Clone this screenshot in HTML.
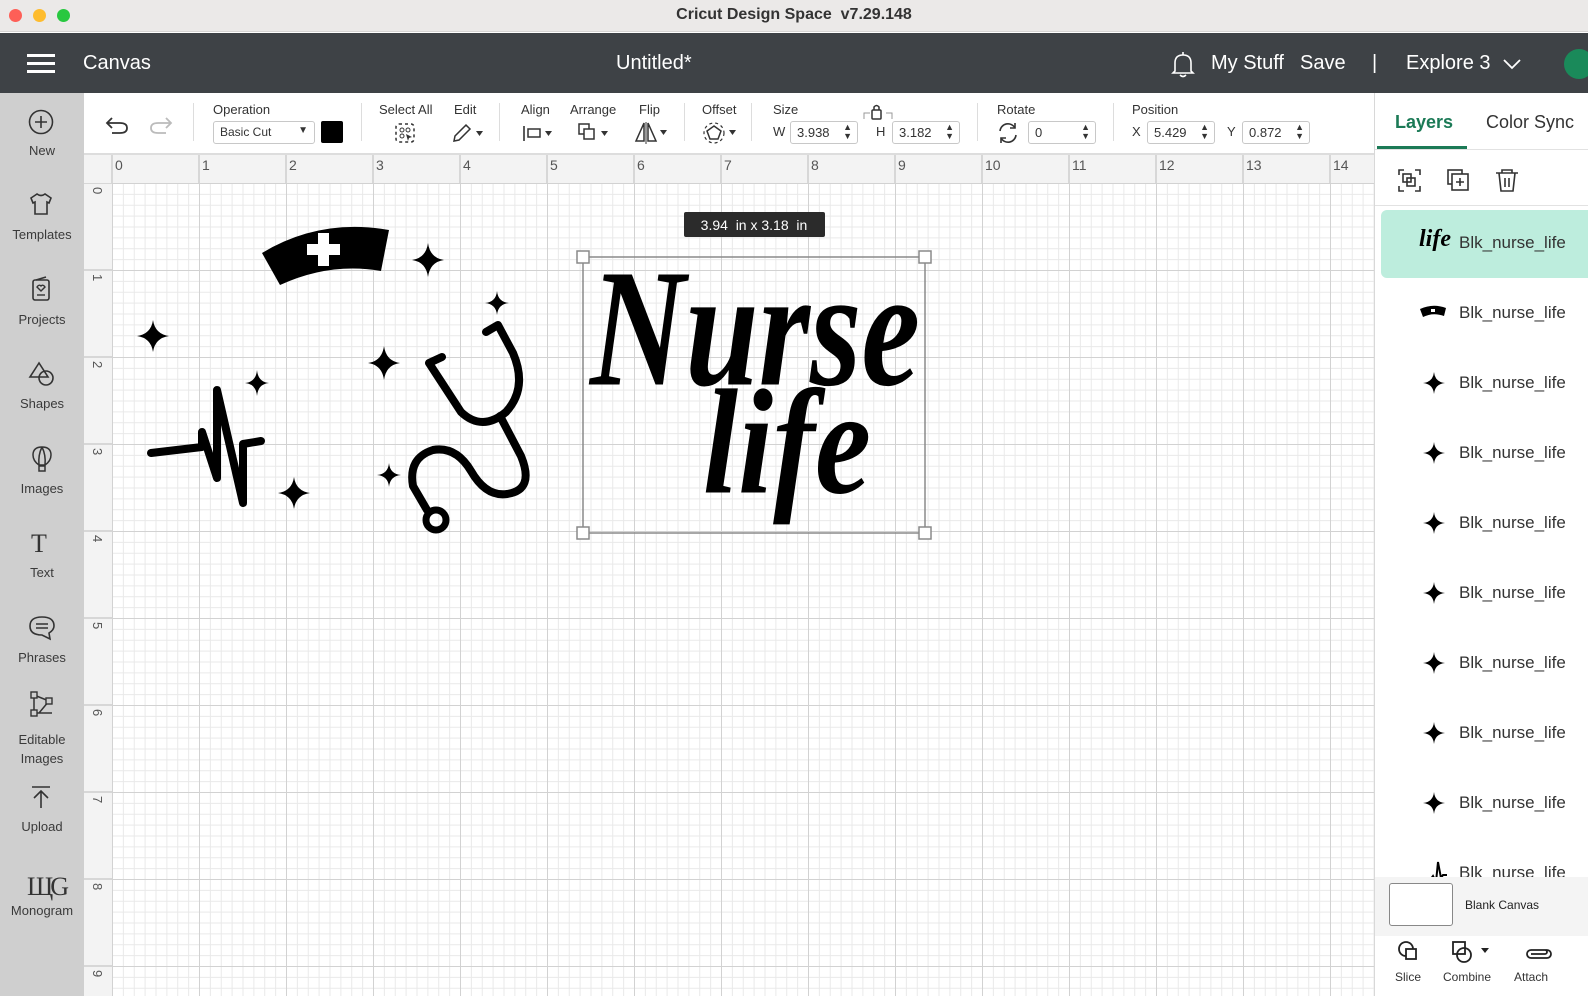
<!DOCTYPE html>
<html><head><meta charset="utf-8"><style>
*{margin:0;padding:0;box-sizing:border-box}
body{width:1588px;height:996px;overflow:hidden;position:relative;font-family:"Liberation Sans",sans-serif;background:#fff;color:#333}
.abs{position:absolute}
#title{left:0;top:0;width:1588px;height:32px;background:#ebe9e8;border-bottom:1px solid #d6d4d3}
#title .t{position:absolute;left:0;right:0;top:6px;text-align:center;font-weight:bold;font-size:16px;color:#333}
.dot{position:absolute;top:9px;width:13px;height:13px;border-radius:50%}
#hdr{left:0;top:33px;width:1588px;height:60px;background:#3e4246;color:#fff}
#side{left:0;top:93px;width:84px;height:903px;background:#cfcfcf}
.si{position:absolute;left:0;width:84px;text-align:center;font-size:13px;color:#3a3a3a}
#tb{left:84px;top:93px;width:1290px;height:60px;background:#fff}
.lbl{position:absolute;top:9px;font-size:13px;color:#333}
.inp{position:absolute;top:28px;height:23px;border:1px solid #c8c8c8;border-radius:3px;font-size:13px;padding:3px 6px;color:#333;background:#fff}
.sep{position:absolute;top:10px;width:1px;height:38px;background:#ddd}
#rt{left:84px;top:153px;width:1290px;height:30px;background:#f3f3f3;border-top:2px solid #ddd}
#rl{left:84px;top:183px;width:28px;height:813px;background:#f3f3f3}
#grid{left:112px;top:183px;width:1262px;height:813px;
background-color:#fff;
background-image:
linear-gradient(to right,#d2d2d2 1px,transparent 1px),
linear-gradient(to bottom,#d2d2d2 1px,transparent 1px),
linear-gradient(to right,#e9e9e9 1px,transparent 1px),
linear-gradient(to bottom,#e9e9e9 1px,transparent 1px);
background-size:87px 87px,87px 87px,10.875px 10.875px,10.875px 10.875px}
#rp{left:1374px;top:93px;width:214px;height:903px;background:#fff;border-left:1px solid #d8d8d8}
.row{position:absolute;left:6px;width:210px;height:68px;font-size:17px;color:#333}
.row span{position:absolute;left:78px;top:23px}
.bi{position:absolute;font-size:12px;color:#333;text-align:center}
</style></head><body>
<div id="title" class="abs">
<div class="dot" style="left:9px;background:#fe5f57"></div>
<div class="dot" style="left:33px;background:#febc2e"></div>
<div class="dot" style="left:57px;background:#28c840"></div>
<div class="t">Cricut Design Space&nbsp; v7.29.148</div>
</div>
<div id="hdr" class="abs">
<div class="abs" style="left:27px;top:21px;width:28px;height:3px;background:#fff"></div>
<div class="abs" style="left:27px;top:29px;width:28px;height:3px;background:#fff"></div>
<div class="abs" style="left:27px;top:37px;width:28px;height:3px;background:#fff"></div>
<div class="abs" style="left:83px;top:19px;font-size:20px">Canvas</div>
<div class="abs" style="left:616px;top:19px;font-size:20px">Untitled*</div>
<svg class="abs" style="left:1170px;top:18px" width="26" height="28" viewBox="0 0 26 28"><path d="M5 20 L5 12 Q5 4 13 4 Q21 4 21 12 L21 20 L23 22 L3 22 Z M10 24 Q13 27 16 24" fill="none" stroke="#fff" stroke-width="1.6"/><path d="M13 1v3" stroke="#fff" stroke-width="1.6"/></svg>
<div class="abs" style="left:1211px;top:19px;font-size:20px">My Stuff</div>
<div class="abs" style="left:1300px;top:19px;font-size:20px">Save</div>
<div class="abs" style="left:1372px;top:19px;font-size:20px">|</div>
<div class="abs" style="left:1406px;top:19px;font-size:20px">Explore 3</div>
<svg class="abs" style="left:1502px;top:24px" width="20" height="14"><path d="M2 3 L10 11 L18 3" fill="none" stroke="#fff" stroke-width="1.8"/></svg>
<div class="abs" style="left:1564px;top:16px;width:30px;height:30px;border-radius:50%;background:#1a8a5a"></div>
</div>
<div id="side" class="abs">
<svg class="abs" style="left:28px;top:16px" width="26" height="26"><circle cx="13" cy="13" r="11.5" fill="none" stroke="#333" stroke-width="1.6"/><path d="M13 7v12M7 13h12" stroke="#333" stroke-width="1.6"/></svg>
<div class="si" style="top:50px">New</div>
<svg class="abs" style="left:29px;top:99px" width="24" height="24"><path d="M8 2 L2 6 L4 11 L6 10 L6 22 L18 22 L18 10 L20 11 L22 6 L16 2 Q12 5 8 2Z" fill="none" stroke="#333" stroke-width="1.6"/></svg>
<div class="si" style="top:134px">Templates</div>
<svg class="abs" style="left:31px;top:183px" width="22" height="26"><rect x="2" y="4" width="16" height="20" rx="2" fill="none" stroke="#333" stroke-width="1.6"/><path d="M5 4 L15 1" stroke="#333" stroke-width="1.6"/><path d="M10 15 L6 11 Q8 8 10 10 Q12 8 14 11Z" fill="none" stroke="#333" stroke-width="1.4"/><path d="M6 19h8" stroke="#333" stroke-width="1.4"/></svg>
<div class="si" style="top:219px">Projects</div>
<svg class="abs" style="left:28px;top:268px" width="28" height="26"><path d="M11 2 L2 16 L20 16Z" fill="none" stroke="#333" stroke-width="1.6"/><circle cx="18" cy="17" r="7" fill="none" stroke="#333" stroke-width="1.6"/></svg>
<div class="si" style="top:303px">Shapes</div>
<svg class="abs" style="left:31px;top:352px" width="22" height="28"><path d="M11 2 Q2 2 2 10 Q2 16 8 20 L14 20 Q20 16 20 10 Q20 2 11 2Z M11 2 Q7 10 8 20 M11 2 Q15 10 14 20" fill="none" stroke="#333" stroke-width="1.5"/><rect x="8" y="21" width="6" height="5" fill="none" stroke="#333" stroke-width="1.5"/></svg>
<div class="si" style="top:388px">Images</div>
<div class="abs" style="left:31px;top:436px;font-family:'Liberation Serif',serif;font-size:26px;color:#333">T</div>
<div class="si" style="top:472px">Text</div>
<svg class="abs" style="left:28px;top:522px" width="28" height="26"><path d="M14 2 Q2 2 2 11 Q2 20 14 20 L22 24 L21 18 Q26 15 26 11 Q26 2 14 2Z" fill="none" stroke="#333" stroke-width="1.6"/><path d="M8 9h12M8 13h12" stroke="#333" stroke-width="1.4"/></svg>
<div class="si" style="top:557px">Phrases</div>
<svg class="abs" style="left:29px;top:598px" width="26" height="28"><path d="M5 4 L5 22 L23 22 M5 4 L20 10 M10 22 L20 10" fill="none" stroke="#333" stroke-width="1.5"/><rect x="2" y="1" width="6" height="6" fill="#cfcfcf" stroke="#333" stroke-width="1.4"/><rect x="17" y="7" width="6" height="6" fill="#cfcfcf" stroke="#333" stroke-width="1.4"/><rect x="2" y="19" width="6" height="6" fill="#cfcfcf" stroke="#333" stroke-width="1.4"/></svg>
<div class="si" style="top:637px;line-height:19px">Editable<br>Images</div>
<svg class="abs" style="left:30px;top:692px" width="22" height="24"><path d="M2 2h18M11 6v17M4 13l7-7 7 7" fill="none" stroke="#333" stroke-width="1.6"/></svg>
<div class="si" style="top:726px">Upload</div>
<div class="abs" style="left:27px;top:779px;font-family:'Liberation Serif',serif;font-size:26px;color:#333;letter-spacing:-3px">ЩG</div>
<div class="si" style="top:810px">Monogram</div>
</div>

<div id="tb" class="abs">
<svg class="abs" style="left:20px;top:22px" width="26" height="20"><path d="M8 3 L3 8 L8 13 M3 8 L16 8 Q23 8 23 13 Q23 18 16 18 L8 18" fill="none" stroke="#333" stroke-width="1.8"/></svg>
<svg class="abs" style="left:64px;top:22px" width="26" height="20"><path d="M18 3 L23 8 L18 13 M23 8 L10 8 Q3 8 3 13 Q3 18 10 18 L18 18" fill="none" stroke="#bbb" stroke-width="1.8"/></svg>
<div class="sep" style="left:109px"></div>
<div class="lbl" style="left:129px">Operation</div>
<div class="inp" style="left:129px;width:102px;font-size:12px">Basic Cut<span style="position:absolute;right:6px;font-size:10px">▼</span></div>
<div class="abs" style="left:237px;top:28px;width:22px;height:22px;background:#000;border-radius:2px"></div>
<div class="sep" style="left:277px"></div>
<div class="lbl" style="left:295px">Select All</div>
<svg class="abs" style="left:310px;top:29px" width="22" height="22"><rect x="2" y="2" width="18" height="18" rx="3" fill="none" stroke="#333" stroke-width="1.5" stroke-dasharray="3 3"/><circle cx="8" cy="8" r="2" fill="none" stroke="#333"/><circle cx="14" cy="8" r="2" fill="none" stroke="#333"/><circle cx="8" cy="14" r="2" fill="none" stroke="#333"/><path d="M12 12l6 3-3 1-1 3z" fill="#333"/></svg>
<div class="lbl" style="left:370px">Edit</div>
<svg class="abs" style="left:367px;top:29px" width="36" height="22"><path d="M3 19 L4 14 L15 3 L19 7 L8 18Z" fill="none" stroke="#333" stroke-width="1.5"/><path d="M25 9h7l-3.5 5z" fill="#333"/></svg>
<div class="sep" style="left:415px"></div>
<div class="lbl" style="left:437px">Align</div>
<svg class="abs" style="left:438px;top:30px" width="34" height="20"><path d="M2 3v15" stroke="#333" stroke-width="1.6"/><rect x="6" y="6" width="12" height="8" fill="none" stroke="#333" stroke-width="1.5"/><path d="M23 8h7l-3.5 5z" fill="#333"/></svg>
<div class="lbl" style="left:486px">Arrange</div>
<svg class="abs" style="left:493px;top:29px" width="34" height="22"><rect x="2" y="2" width="10" height="10" fill="none" stroke="#333" stroke-width="1.5"/><rect x="7" y="7" width="10" height="10" fill="#fff" stroke="#333" stroke-width="1.5"/><path d="M24 9h7l-3.5 5z" fill="#333"/></svg>
<div class="lbl" style="left:555px">Flip</div>
<svg class="abs" style="left:550px;top:28px" width="36" height="24"><path d="M10 2 L2 20 L10 20Z M14 2 L22 20 L14 20Z" fill="none" stroke="#333" stroke-width="1.5"/><path d="M12 1v22" stroke="#333"/><path d="M26 9h7l-3.5 5z" fill="#333"/></svg>
<div class="sep" style="left:600px"></div>
<div class="lbl" style="left:618px">Offset</div>
<svg class="abs" style="left:619px;top:28px" width="36" height="24"><path d="M11 5 L18 10 L15 18 L7 18 L4 10Z" fill="none" stroke="#333" stroke-width="1.5"/><circle cx="11" cy="12" r="10" fill="none" stroke="#333" stroke-width="1.2" stroke-dasharray="3 3"/><path d="M26 9h7l-3.5 5z" fill="#333"/></svg>
<div class="sep" style="left:667px"></div>
<div class="lbl" style="left:689px">Size</div>
<svg class="abs" style="left:778px;top:10px" width="32" height="18"><rect x="10" y="7" width="9" height="9" rx="1" fill="none" stroke="#333" stroke-width="1.5"/><path d="M12 7 V4 Q14.5 1 17 4 V7" fill="none" stroke="#333" stroke-width="1.5"/><path d="M2 16V10h6M30 16V10h-6" fill="none" stroke="#999"/></svg>
<div class="abs" style="left:689px;top:31px;font-size:13px">W</div>
<div class="inp" style="left:706px;width:68px">3.938<span style="position:absolute;right:5px;top:1px;font-size:9px;line-height:9px">▲<br>▼</span></div>
<div class="abs" style="left:792px;top:31px;font-size:13px">H</div>
<div class="inp" style="left:808px;width:68px">3.182<span style="position:absolute;right:5px;top:1px;font-size:9px;line-height:9px">▲<br>▼</span></div>
<div class="sep" style="left:893px"></div>
<div class="lbl" style="left:913px">Rotate</div>
<svg class="abs" style="left:912px;top:28px" width="24" height="24"><path d="M4 10 A8 8 0 0 1 19 7 M20 14 A8 8 0 0 1 5 17" fill="none" stroke="#333" stroke-width="1.6"/><path d="M19 2v5h-5M5 22v-5h5" fill="none" stroke="#333" stroke-width="1.6"/></svg>
<div class="inp" style="left:944px;width:68px">0<span style="position:absolute;right:5px;top:1px;font-size:9px;line-height:9px">▲<br>▼</span></div>
<div class="sep" style="left:1029px"></div>
<div class="lbl" style="left:1048px">Position</div>
<div class="abs" style="left:1048px;top:31px;font-size:13px">X</div>
<div class="inp" style="left:1063px;width:68px">5.429<span style="position:absolute;right:5px;top:1px;font-size:9px;line-height:9px">▲<br>▼</span></div>
<div class="abs" style="left:1143px;top:31px;font-size:13px">Y</div>
<div class="inp" style="left:1158px;width:68px">0.872<span style="position:absolute;right:5px;top:1px;font-size:9px;line-height:9px">▲<br>▼</span></div>
</div>

<div id="rt" class="abs">
<svg width="1290" height="28" style="position:absolute;left:0;top:0">
<g font-size="14" fill="#555" font-family="Liberation Sans">
<text x="31" y="15">0</text><text x="118" y="15">1</text><text x="205" y="15">2</text><text x="292" y="15">3</text><text x="379" y="15">4</text><text x="466" y="15">5</text><text x="553" y="15">6</text><text x="640" y="15">7</text><text x="727" y="15">8</text><text x="814" y="15">9</text><text x="901" y="15">10</text><text x="988" y="15">11</text><text x="1075" y="15">12</text><text x="1162" y="15">13</text><text x="1249" y="15">14</text>
</g>
<g stroke="#bbb">
<path d="M28 0v28M115 0v28M202 0v28M289 0v28M376 0v28M463 0v28M550 0v28M637 0v28M724 0v28M811 0v28M898 0v28M985 0v28M1072 0v28M1159 0v28M1246 0v28"/>
</g>
</svg>
</div>
<div id="rl" class="abs">
<svg width="28" height="813">
<g font-size="13" fill="#555" font-family="Liberation Sans">
<text transform="translate(9,4) rotate(90)">0</text><text transform="translate(9,91) rotate(90)">1</text><text transform="translate(9,178) rotate(90)">2</text><text transform="translate(9,265) rotate(90)">3</text><text transform="translate(9,352) rotate(90)">4</text><text transform="translate(9,439) rotate(90)">5</text><text transform="translate(9,526) rotate(90)">6</text><text transform="translate(9,613) rotate(90)">7</text><text transform="translate(9,700) rotate(90)">8</text><text transform="translate(9,787) rotate(90)">9</text>
</g>
<path d="M0 0h28M0 87h28M0 174h28M0 261h28M0 348h28M0 435h28M0 522h28M0 609h28M0 696h28M0 783h28" stroke="#bbb"/>
</svg>
</div>
<div id="grid" class="abs"></div>

<svg class="abs" style="left:0;top:0" width="1374" height="996">
<path d="M262 253 Q320 218 389 230 L381 271 Q330 262 280 285 Z" fill="#000"/>
<path d="M318 233h11v11h11v11h-11v11h-11v-11h-11v-11h11z" fill="#fff"/>
<g fill="#000">
<path d="M153 320 Q155 334 169 336 Q155 338 153 352 Q151 338 137 336 Q151 334 153 320Z"/>
<path d="M428 243 Q430 258 444 260 Q430 262 428 277 Q426 262 412 260 Q426 258 428 243Z"/>
<path d="M497 291 Q498 302 509 303 Q498 304 497 315 Q496 304 485 303 Q496 302 497 291Z"/>
<path d="M384 346 Q386 361 400 363 Q386 365 384 380 Q382 365 368 363 Q382 361 384 346Z"/>
<path d="M257 370 Q258 382 269 383 Q258 384 257 396 Q256 384 245 383 Q256 382 257 370Z"/>
<path d="M294 477 Q296 491 310 493 Q296 495 294 509 Q292 495 278 493 Q292 491 294 477Z"/>
<path d="M389 463 Q390 474 401 475 Q390 476 389 487 Q388 476 377 475 Q388 474 389 463Z"/>
</g>
<path d="M151 453 L202 447 L202 432 L217 478 L217 390 L243 503 L243 444 L261 441" fill="none" stroke="#000" stroke-width="8" stroke-linejoin="round" stroke-linecap="round"/>
<path d="M442 357 L429 363 L461 412 Q482 432 506 412 Q528 388 513 353 L498 325 L486 332" fill="none" stroke="#000" stroke-width="8" stroke-linejoin="round" stroke-linecap="round"/>
<path d="M500 416 L521 456 Q535 490 507 494 Q486 497 471 471 Q456 446 433 450 Q408 458 413 486 L427 510" fill="none" stroke="#000" stroke-width="8" stroke-linejoin="round" stroke-linecap="round"/>
<circle cx="436" cy="520" r="10" fill="none" stroke="#000" stroke-width="7"/>
<rect x="583" y="257" width="342" height="276" fill="none" stroke="#8a8a8a" stroke-width="1.5"/>
<g fill="#fff" stroke="#8a8a8a" stroke-width="1.5">
<rect x="577" y="251" width="12" height="12"/><rect x="919" y="251" width="12" height="12"/><rect x="577" y="527" width="12" height="12"/><rect x="919" y="527" width="12" height="12"/>
</g>
<text x="590" y="383" font-family="Liberation Serif" font-style="italic" font-weight="bold" font-size="112" textLength="330" lengthAdjust="spacingAndGlyphs" transform="translate(0,-190) scale(1,1.5)" fill="#000">Nurse</text>
<text x="703" y="445" font-family="Liberation Serif" font-style="italic" font-weight="bold" font-size="100" textLength="168" lengthAdjust="spacingAndGlyphs" transform="translate(0,-175) scale(1,1.5)" fill="#000">life</text>
<rect x="684" y="212" width="141" height="25" rx="2" fill="#2b2b2b"/>
<text x="754" y="230" text-anchor="middle" font-size="14" fill="#fff" font-family="Liberation Sans">3.94&#160; in x 3.18&#160; in</text>
</svg>

<div id="rp" class="abs">
<div class="abs" style="left:20px;top:19px;font-size:18px;font-weight:bold;color:#1b7a56">Layers</div>
<div class="abs" style="left:111px;top:19px;font-size:18px;color:#333;white-space:nowrap">Color Sync</div>
<div class="abs" style="left:2px;top:53px;width:90px;height:3px;background:#1b7a56"></div>
<div class="abs" style="left:0;top:56px;width:214px;height:1px;background:#e2e2e2"></div>
<svg class="abs" style="left:22px;top:75px" width="130" height="26"><g fill="none" stroke="#333" stroke-width="1.6"><path d="M2 7V2h5M18 2h5v5M2 18v5h5M23 18v5h-5"/><rect x="6" y="6" width="8" height="8"/><rect x="10" y="10" width="8" height="8"/><rect x="51" y="2" width="14" height="14"/><rect x="55" y="6" width="16" height="16" fill="#fff"/><path d="M63 10v8M59 14h8"/><path d="M99 5h22M105 5V2h10v3M102 5l2 18h12l2-18M108 10v9M112 10v9"/></g></svg>
<div class="abs" style="left:0;top:112px;width:214px;height:1px;background:#e2e2e2"></div>
<div class="row" style="top:117px;background:#bdeddd;border-radius:6px 0 0 6px"><div class="abs" style="left:38px;top:16px;font-family:'Liberation Serif',serif;font-style:italic;font-weight:bold;font-size:24px;color:#000">life</div><span>Blk_nurse_life</span></div>
<div class="row" style="top:187px"><svg class="abs" style="left:38px;top:25px" width="28" height="14"><path d="M1 4 Q14 -2 27 3 L25 11 Q14 7 4 12Z" fill="#000"/><path d="M12 4h4v3h-4z" fill="#fff"/></svg><span>Blk_nurse_life</span></div>
<div class="row" style="top:257px"><svg class="abs" style="left:42px;top:22px" width="22" height="22"><path d="M11 0Q12 10 22 11Q12 12 11 22Q10 12 0 11Q10 10 11 0Z"/></svg><span>Blk_nurse_life</span></div>
<div class="row" style="top:327px"><svg class="abs" style="left:42px;top:22px" width="22" height="22"><path d="M11 0Q12 10 22 11Q12 12 11 22Q10 12 0 11Q10 10 11 0Z"/></svg><span>Blk_nurse_life</span></div>
<div class="row" style="top:397px"><svg class="abs" style="left:42px;top:22px" width="22" height="22"><path d="M11 0Q12 10 22 11Q12 12 11 22Q10 12 0 11Q10 10 11 0Z"/></svg><span>Blk_nurse_life</span></div>
<div class="row" style="top:467px"><svg class="abs" style="left:42px;top:22px" width="22" height="22"><path d="M11 0Q12 10 22 11Q12 12 11 22Q10 12 0 11Q10 10 11 0Z"/></svg><span>Blk_nurse_life</span></div>
<div class="row" style="top:537px"><svg class="abs" style="left:42px;top:22px" width="22" height="22"><path d="M11 0Q12 10 22 11Q12 12 11 22Q10 12 0 11Q10 10 11 0Z"/></svg><span>Blk_nurse_life</span></div>
<div class="row" style="top:607px"><svg class="abs" style="left:42px;top:22px" width="22" height="22"><path d="M11 0Q12 10 22 11Q12 12 11 22Q10 12 0 11Q10 10 11 0Z"/></svg><span>Blk_nurse_life</span></div>
<div class="row" style="top:677px"><svg class="abs" style="left:42px;top:22px" width="22" height="22"><path d="M11 0Q12 10 22 11Q12 12 11 22Q10 12 0 11Q10 10 11 0Z"/></svg><span>Blk_nurse_life</span></div>
<div class="row" style="top:747px"><svg class="abs" style="left:40px;top:20px" width="26" height="22"><path d="M1 20h8l3-4 3 6 2-20 3 16 2-3h4" fill="none" stroke="#000" stroke-width="2"/></svg><span>Blk_nurse_life</span></div>
<div class="abs" style="left:0;top:784px;width:214px;height:59px;background:#f4f4f4"></div>
<div class="abs" style="left:14px;top:790px;width:64px;height:43px;border:1.5px solid #888;border-radius:3px;background:#fff"></div>
<div class="abs" style="left:90px;top:805px;font-size:12px;color:#222">Blank Canvas</div>
<div class="abs" style="left:0;top:843px;width:214px;height:60px;background:#fff"></div>
<svg class="abs" style="left:22px;top:847px" width="180" height="24"><g fill="none" stroke="#222" stroke-width="1.8"><circle cx="9" cy="9" r="7"/><rect x="9" y="9" width="10" height="10" fill="#fff"/><rect x="56" y="2" width="12" height="12"/><circle cx="67" cy="15" r="7"/><path d="M136 10h14a4 4 0 0 1 0 8h-16a4 4 0 0 1 0-8h14a2 2 0 0 1 0 4h-14"/></g><path d="M84 8h8l-4 5z" fill="#222"/></svg>
<div class="bi" style="left:20px;top:877px">Slice</div>
<div class="bi" style="left:68px;top:877px">Combine</div>
<div class="bi" style="left:139px;top:877px">Attach</div>
</div>
</body></html>
